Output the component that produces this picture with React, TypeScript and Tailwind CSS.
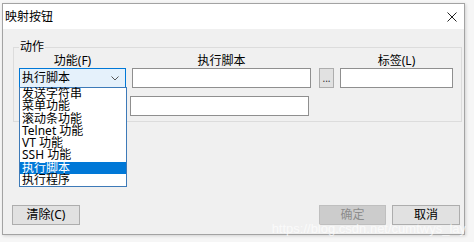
import React from 'react';

const items = ['发送字符串', '菜单功能', '滚动条功能', 'Telnet 功能', 'VT 功能', 'SSH 功能', '执行脚本', '执行程序'];

export default function App() {
  return (
    <div className="relative w-[474px] h-[242px] bg-[#f6f6f6] pl-[2px] pt-[3px] text-[12px] text-black font-['Noto_Sans','Noto_Sans_CJK_SC',sans-serif] overflow-hidden">
      <div className="w-[463px] h-[232px] border border-[#a3a3a3] flex flex-col shadow-[1px_1px_3px_rgba(0,0,0,0.15)]">
        {/* Title bar */}
        <div className="h-[25px] bg-white flex items-center justify-between pl-[2px] pr-[7px]">
          <span className="leading-[14px]">映射按钮</span>
          <svg width="10" height="10" viewBox="0 0 10 10" className="text-[#222]">
            <path d="M0.5 0.5 L9.5 9.5 M9.5 0.5 L0.5 9.5" stroke="currentColor" strokeWidth="1" />
          </svg>
        </div>

        {/* Body */}
        <div className="flex-1 bg-[#f0f0f0] flex flex-col">
          <fieldset className="mt-[11px] ml-[10px] w-[449px] border border-[#dcdcdc] pb-[5px]">
            <legend className="ml-[5px] px-[1px] leading-[14px]">动作</legend>

            {/* Column labels */}
            <div className="flex pl-[5px] h-[14px] leading-[14px]">
              <span className="w-[107px] text-center">功能(F)</span>
              <span className="ml-[6px] w-[179px] text-center">执行脚本</span>
              <span className="ml-[29px] w-[113px] text-center">标签(L)</span>
            </div>

            {/* Row 1 */}
            <div className="flex pl-[5px] h-[20px]">
              <div className="relative w-[107px] h-[20px]">
                <div className="h-full border border-[#0078d7] bg-[#e5f1fb] flex items-center justify-between pl-[2px] pr-[6px] leading-[14px]">
                  <span>执行脚本</span>
                  <svg width="8" height="5" viewBox="0 0 8 5">
                    <path d="M0.5 0.5 L4 4 L7.5 0.5" fill="none" stroke="#555" strokeWidth="1" />
                  </svg>
                </div>
                {/* Dropdown list */}
                <div className="absolute left-0 top-[19px] z-10 w-[108px] border border-[#3d7ab8] bg-white">
                  {items.map((it, i) => (
                    <div
                      key={it}
                      className={
                        i === 6
                          ? 'h-[12.3px] leading-[12.3px] pl-[2px] bg-[#0078d7] text-white whitespace-nowrap'
                          : 'h-[12.3px] leading-[12.3px] pl-[2px] whitespace-nowrap'
                      }
                    >
                      {it}
                    </div>
                  ))}
                </div>
              </div>
              <div className="ml-[6px] w-[179px] h-[20px] bg-white border border-[#8f8f8f]" />
              <div className="ml-[8px] w-[15px] h-[20px] bg-[#e1e1e1] border border-[#adadad] flex items-end justify-center pb-[4px] leading-none text-[10px] text-[#333]">
                ...
              </div>
              <div className="ml-[6px] w-[113px] h-[20px] bg-white border border-[#8f8f8f]" />
            </div>

            {/* Row 2 */}
            <div className="flex pl-[116px] mt-[8px]">
              <div className="w-[179px] h-[20px] bg-white border border-[#8f8f8f]" />
            </div>
          </fieldset>

          {/* Buttons */}
          <div className="mt-auto mb-[9px] flex items-center pl-[9px] pr-[4px]">
            <button className="w-[68px] h-[20px] bg-[#e1e1e1] border border-[#adadad] leading-[14px]">清除(C)</button>
            <div className="flex-1" />
            <button disabled className="w-[67px] h-[20px] bg-[#cccccc] border border-[#bfbfbf] text-[#8c8c8c] leading-[14px]">确定</button>
            <button className="ml-[6px] w-[68px] h-[20px] bg-[#e1e1e1] border border-[#adadad] leading-[14px]">取消</button>
          </div>
        </div>
      </div>

      {/* Watermark */}
      <div className="absolute right-[8px] bottom-[6px] text-[13px] leading-[14px] text-white/70 font-['Liberation_Sans',sans-serif] pointer-events-none">
        https://blog.csdn.net/cumtwys_lay
      </div>
    </div>
  );
}
